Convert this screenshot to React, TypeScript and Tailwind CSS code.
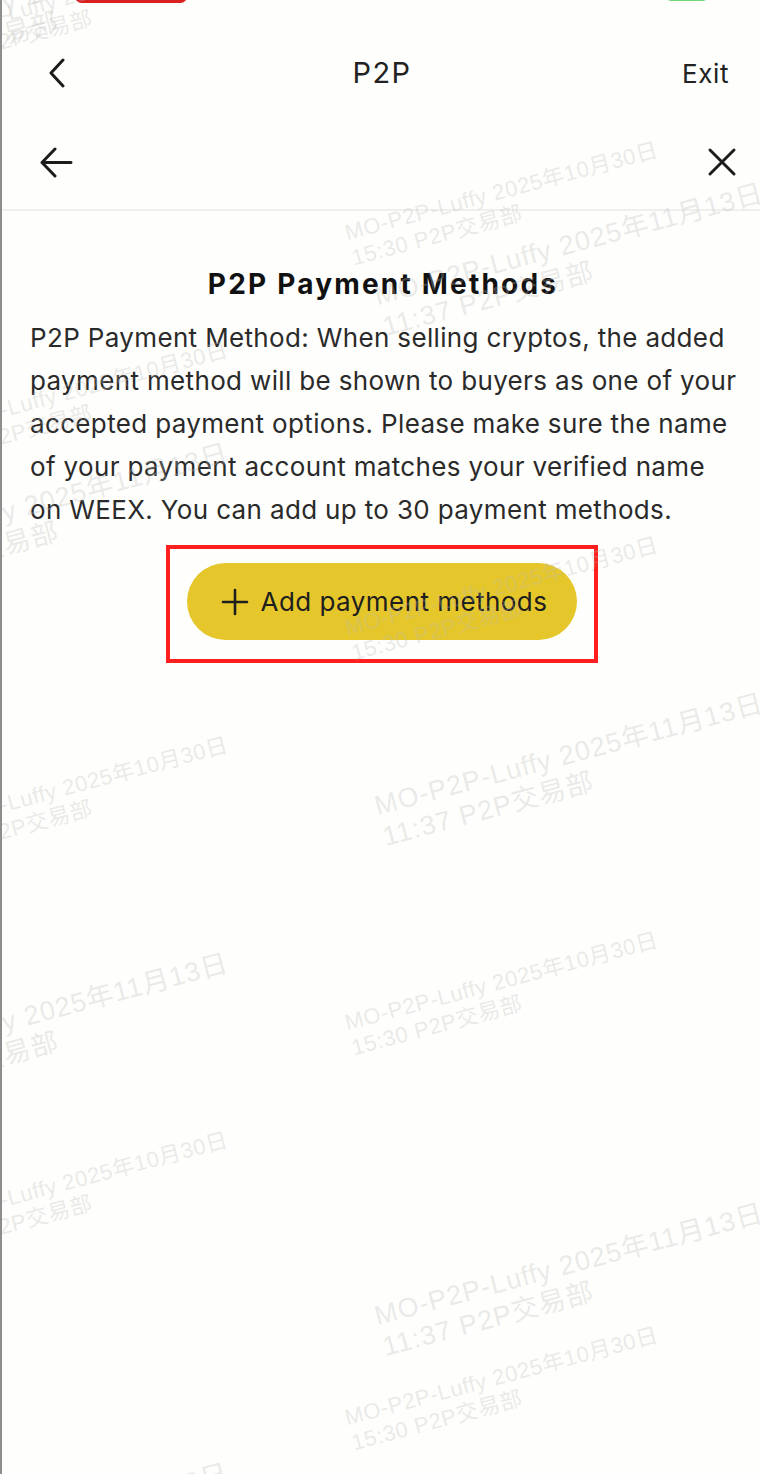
import React from "react";

const MARK_A = ["MO-P2P-Luffy 2025年11月13日", "11:37 P2P交易部"];
const MARK_B = ["MO-P2P-Luffy 2025年10月30日", "15:30 P2P交易部"];

// baseline start of first line, in page px
const marks: { x: number; y: number; big: boolean }[] = [
  { x: 375, y: 305, big: true },
  { x: 375, y: 815, big: true },
  { x: 375, y: 1325, big: true },
  { x: -160, y: 55, big: true },
  { x: -160, y: 565, big: true },
  { x: -160, y: 1075, big: true },
  { x: -160, y: 1585, big: true },
  { x: 345, y: 240, big: false },
  { x: 345, y: 635, big: false },
  { x: 345, y: 1030, big: false },
  { x: 345, y: 1425, big: false },
  { x: -85, y: 45, big: false },
  { x: -85, y: 440, big: false },
  { x: -85, y: 835, big: false },
  { x: -85, y: 1230, big: false },
];

function Watermarks() {
  return (
    <div className="pointer-events-none absolute inset-0 z-10 overflow-hidden">
      {marks.map((m, i) => {
        const lines = m.big ? MARK_A : MARK_B;
        return (
          <div
            key={i}
            className={
              "absolute origin-top-left -rotate-[15deg] whitespace-nowrap font-['Liberation_Sans','Noto_Sans_CJK_SC',sans-serif] text-[rgba(185,185,185,0.3)] " +
              (m.big ? "text-[27px] leading-[32px] tracking-[1px]" : "text-[22px] leading-[26px] tracking-[0.6px]")
            }
            style={{ left: m.x - (m.big ? 6 : 5), top: m.y - (m.big ? 24 : 19) }}
          >
            <div>{lines[0]}</div>
            <div>{lines[1]}</div>
          </div>
        );
      })}
    </div>
  );
}

export default function App() {
  return (
    <div className="relative h-[1474px] w-[760px] overflow-hidden border-l-2 border-[#8d8d8d] bg-[#fefefc] font-['Inter','Noto_Sans',sans-serif] text-[#1c1c1c]">
      {/* cropped status bar remnants */}
      <div className="absolute left-[73px] top-[-10px] h-[13px] w-[112px] rounded-full bg-[#d8201f]" />
      <div className="absolute left-[663px] top-[-12px] h-[13px] w-[44px] rounded-full bg-[#6fd67a]" />

      {/* top bar */}
      <div className="mt-[42px] flex h-[62px] items-center justify-between px-[45px]">
        <svg width="22" height="30" viewBox="0 0 22 30" fill="none" className="-ml-[1px]">
          <path d="M17 2 L5 15 L17 28" stroke="#1c1c1c" strokeWidth="3" strokeLinecap="round" strokeLinejoin="round" />
        </svg>
        <span className="ml-[14px] text-[29px] tracking-[1.4px] text-[#222]">P2P</span>
        <span className="-mr-[14px] text-[26px] tracking-[0.6px] text-[#222]">Exit</span>
      </div>

      {/* sub header */}
      <div className="mt-[24px] flex h-[68px] items-center justify-between pl-[37px] pr-[23px]">
        <svg width="34" height="31" viewBox="0 0 34 31" fill="none">
          <path d="M32 15.5 H3 M16 2 L3 15.5 L16 29" stroke="#1c1c1c" strokeWidth="3" strokeLinecap="round" strokeLinejoin="round" />
        </svg>
        <svg width="30" height="30" viewBox="0 0 30 30" fill="none">
          <path d="M3 3 L27 27 M27 3 L3 27" stroke="#1c1c1c" strokeWidth="3" strokeLinecap="round" />
        </svg>
      </div>
      <div className="mt-[13px] h-[2px] bg-[#f0efee]" />

      {/* content */}
      <div className="pl-[28px] pr-[24px]">
        <h1 className="mt-[57px] text-center text-[28px] font-bold leading-[32px] tracking-[2.2px] text-[#111]">
          P2P Payment Methods
        </h1>
        <p className="mt-[16px] whitespace-nowrap text-[26px] leading-[43px] tracking-[0.35px] text-[#2a2a2a]">
          P2P Payment Method: When selling cryptos, the added
          <br />
          payment method will be shown to buyers as one of your
          <br />
          accepted payment options. Please make sure the name
          <br />
          of your payment account matches your verified name
          <br />
          on WEEX. You can add up to 30 payment methods.
        </p>
      </div>

      <div className="mt-[14px] flex justify-center">
        <div className="ml-[2px] border-[4px] border-[#ff1f1f] px-[17px] pb-[19px] pt-[14px]">
          <button className="flex h-[77px] w-[390px] items-center justify-center gap-[12px] rounded-full bg-[#e6c72b] pl-[4px] text-[26px] tracking-[0.45px] text-[#1e1e1e]">
            <svg width="28" height="28" viewBox="0 0 28 28" fill="none">
              <path d="M14 2 V26 M2 14 H26" stroke="#1e1e1e" strokeWidth="2.6" strokeLinecap="round" />
            </svg>
            <span>Add payment methods</span>
          </button>
        </div>
      </div>

      <Watermarks />
    </div>
  );
}
